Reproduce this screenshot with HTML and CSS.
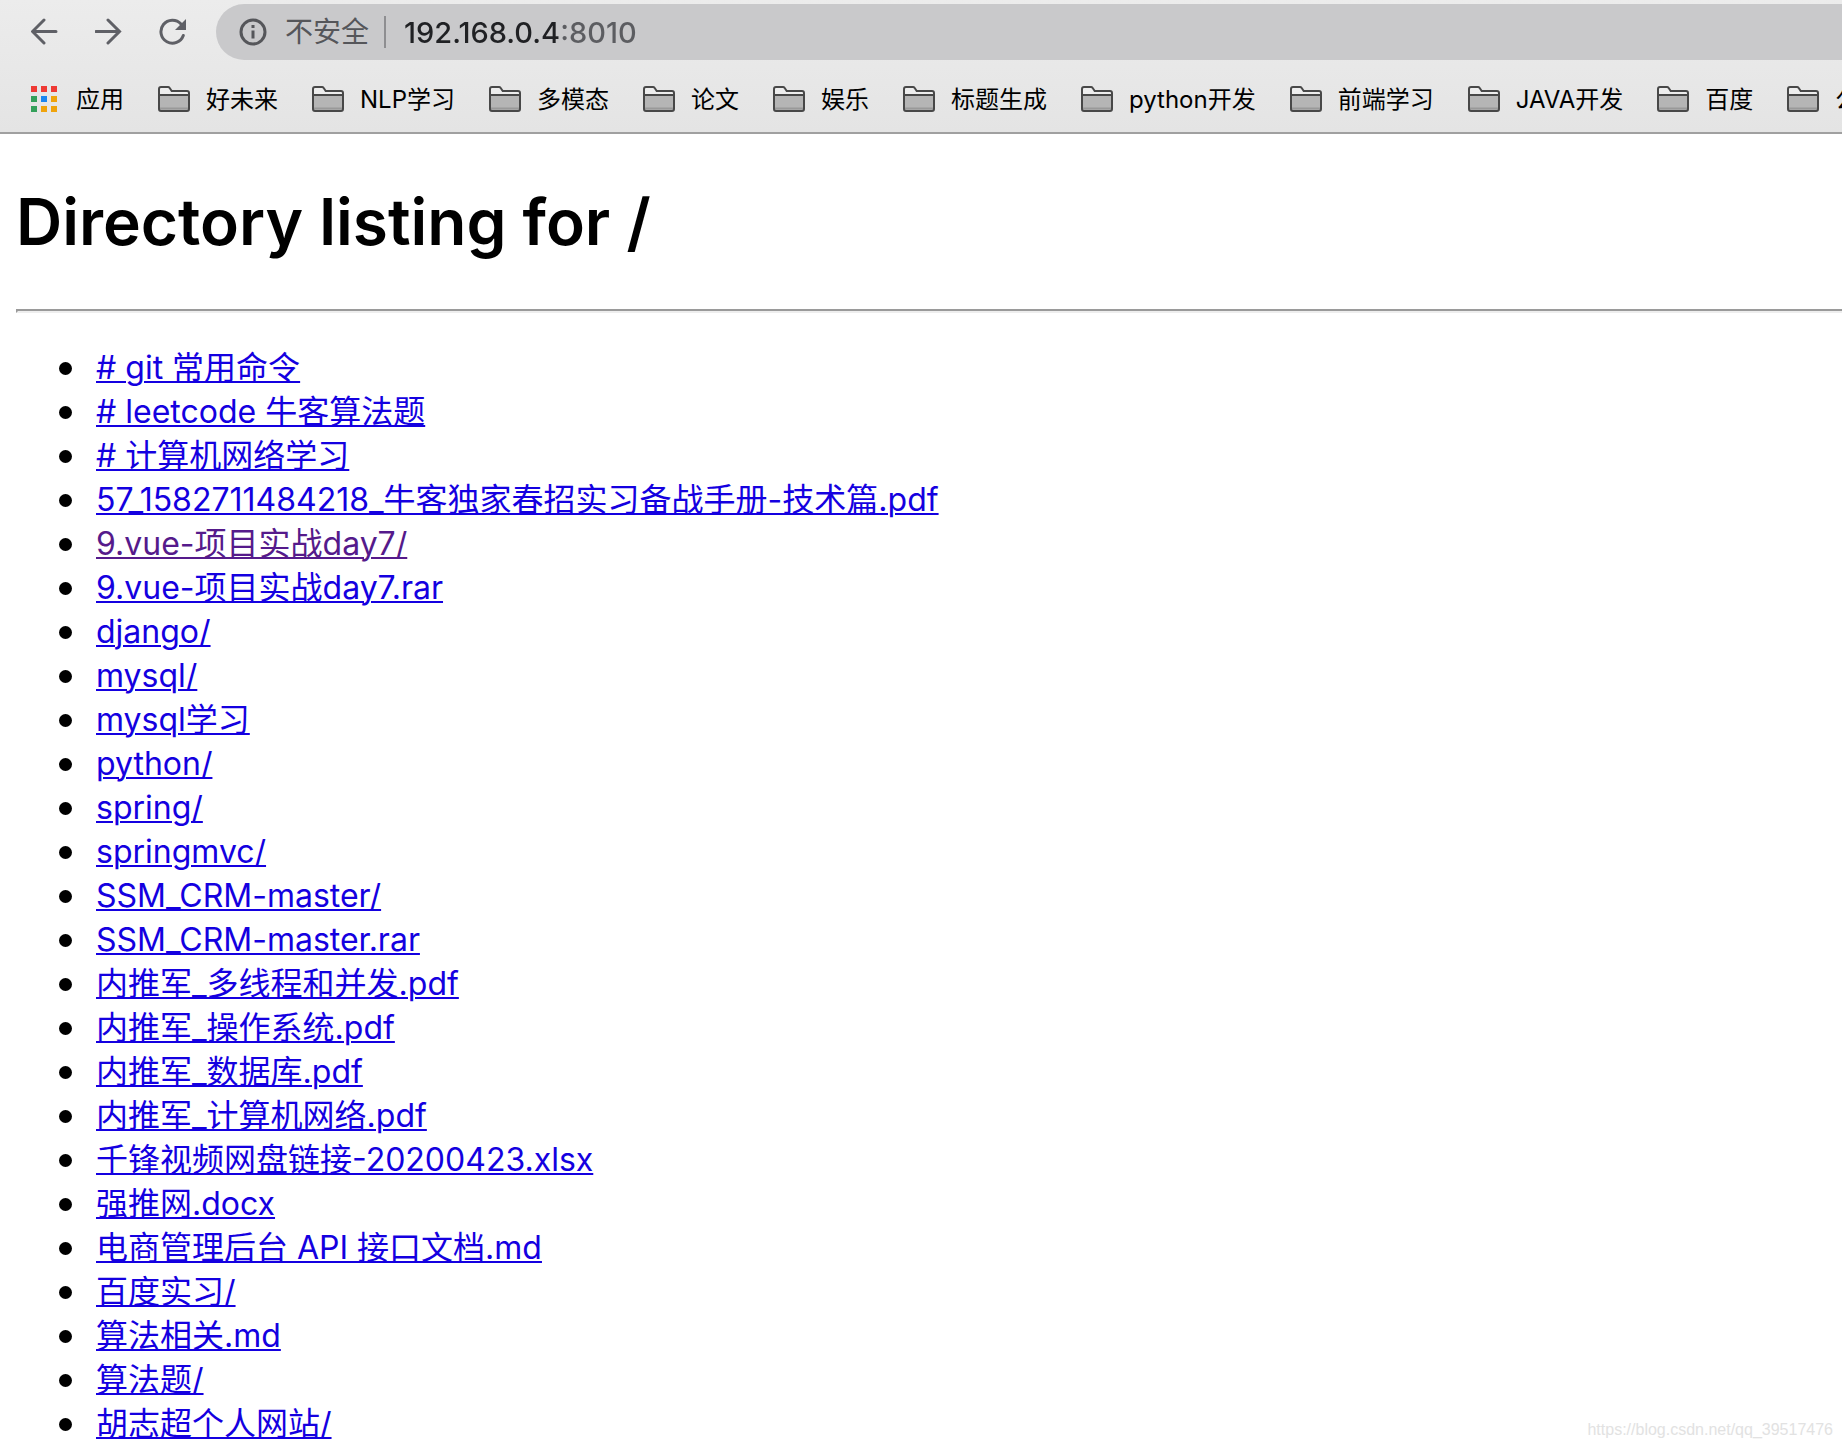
FILE: index.html
```html
<!DOCTYPE html>
<html lang="zh-CN">
<head>
	<meta charset="UTF-8">
	<title>Directory listing for /</title>
	<link rel="stylesheet" href="styles.css">
</head>
<body>
	<!-- 图标 -->
	<svg class="defs" width="0" height="0">
		<symbol id="folder" viewBox="0 0 32 26">
			<path d="M1 3q0-2 2-2h7q1 0 1.700 1l2 3H29q2 0 2 2v17H1z" fill="#ededed"/>
			<path d="M2 9h28v15H2z" fill="#b5b5b5"/>
			<path d="M2 22.500h28" stroke="#999" stroke-width="2"/>
			<path d="M1 9h30M1 23V3q0-2 2-2h7q1 0 1.700 1l2 3H29q2 0 2 2v16q0 2-2 2H3q-2 0-2-2z" fill="none" stroke="#484848" stroke-width="2"/>
		</symbol>
	</svg>

	<div class="browser">
		<div class="toolbar">
			<button type="button" aria-label="后退">
				<svg width="28" height="28" viewBox="0 0 28 28"><path d="M25 13.500H2M13 2L1.500 13.500 13 25"/></svg>
			</button>
			<button type="button" aria-label="前进">
				<svg width="28" height="28" viewBox="0 0 28 28"><path d="M1 13.500h23M13 2l11.500 11.500L13 25"/></svg>
			</button>
			<button type="button" aria-label="重新加载">
				<svg width="28" height="28" viewBox="0 0 28 28"><path d="M22 6A11.500 11.500 0 1 0 24.300 17.500"/><path class="fill" d="M27 1v11H16z"/></svg>
			</button>
			<div class="address">
				<svg width="28" height="28" viewBox="0 0 28 28"><circle cx="14" cy="14" r="12"/><path d="M14 12.500v8M14 7v3"/></svg>
				<label for="url">不安全</label>
				<input type="text" id="url" value="192.168.0.4:8010">
			</div>
		</div>

		<div class="bookmarks">
			<a href="#" class="apps">
				<svg width="26" height="26" viewBox="0 0 26 26">
					<path fill="#ee3a34" d="M0 0h6v6H0zM10 0h6v6h-6zM20 0h6v6h-6z"/>
					<path fill="#34a05a" d="M0 10h6v6H0zM0 20h6v6H0z"/>
					<path fill="#1a86f0" d="M10 10h6v6h-6z"/>
					<path fill="#efa30c" d="M20 10h6v6h-6zM10 20h6v6h-6zM20 20h6v6h-6z"/>
				</svg>应用
			</a>
			<a href="#"><svg width="32" height="26"><use href="#folder"/></svg>好未来</a>
			<a href="#"><svg width="32" height="26"><use href="#folder"/></svg>NLP学习</a>
			<a href="#"><svg width="32" height="26"><use href="#folder"/></svg>多模态</a>
			<a href="#"><svg width="32" height="26"><use href="#folder"/></svg>论文</a>
			<a href="#"><svg width="32" height="26"><use href="#folder"/></svg>娱乐</a>
			<a href="#"><svg width="32" height="26"><use href="#folder"/></svg>标题生成</a>
			<a href="#"><svg width="32" height="26"><use href="#folder"/></svg>python开发</a>
			<a href="#"><svg width="32" height="26"><use href="#folder"/></svg>前端学习</a>
			<a href="#"><svg width="32" height="26"><use href="#folder"/></svg>JAVA开发</a>
			<a href="#"><svg width="32" height="26"><use href="#folder"/></svg>百度</a>
			<a href="#"><svg width="32" height="26"><use href="#folder"/></svg>公</a>
		</div>
	</div>

	<div class="page">
		<h1>Directory listing for /</h1>
		<hr>
		<ul>
			<li><a href="#"># git 常用命令</a></li>
			<li><a href="#"># leetcode 牛客算法题</a></li>
			<li><a href="#"># 计算机网络学习</a></li>
			<li><a href="#">57_1582711484218_牛客独家春招实习备战手册-技术篇.pdf</a></li>
			<li><a href="#" class="visited">9.vue-项目实战day7/</a></li>
			<li><a href="#">9.vue-项目实战day7.rar</a></li>
			<li><a href="#">django/</a></li>
			<li><a href="#">mysql/</a></li>
			<li><a href="#">mysql学习</a></li>
			<li><a href="#">python/</a></li>
			<li><a href="#">spring/</a></li>
			<li><a href="#">springmvc/</a></li>
			<li><a href="#">SSM_CRM-master/</a></li>
			<li><a href="#">SSM_CRM-master.rar</a></li>
			<li><a href="#">内推军_多线程和并发.pdf</a></li>
			<li><a href="#">内推军_操作系统.pdf</a></li>
			<li><a href="#">内推军_数据库.pdf</a></li>
			<li><a href="#">内推军_计算机网络.pdf</a></li>
			<li><a href="#">千锋视频网盘链接-20200423.xlsx</a></li>
			<li><a href="#">强推网.docx</a></li>
			<li><a href="#">电商管理后台 API 接口文档.md</a></li>
			<li><a href="#">百度实习/</a></li>
			<li><a href="#">算法相关.md</a></li>
			<li><a href="#">算法题/</a></li>
			<li><a href="#">胡志超个人网站/</a></li>
		</ul>
	</div>
	<div class="watermark">https://blog.csdn.net/qq_39517476</div>
</body>
</html>
```

FILE: styles.css
```css
/*common*/
*{
	box-sizing: border-box;
}
body{
	position: relative;
	margin: 0;
	overflow-x: hidden;
	background-color: #fff;
	color: #000;
	font-family: Inter, "Noto Sans CJK SC", sans-serif;
	font-size: 32px;
}
.defs{
	position: absolute;
}

/*browser*/
.browser{
	overflow: hidden;
	border-bottom: 2px solid #a0a0a0;
	background: linear-gradient(#ececec, #e4e4e4);
}
.toolbar{
	display: flex;
	align-items: center;
	padding: 4px 0 4px 31px;
}
.toolbar svg{
	display: block;
	fill: none;
	stroke: #5f6066;
	stroke-width: 3;
	stroke-linecap: round;
}
.toolbar .fill{
	fill: #5f6066;
	stroke: none;
}
.toolbar button{
	margin: 0 36px 0 0;
	padding: 0;
	border: 0;
	background: none;
}
.toolbar button:nth-child(3){
	margin-right: 29px;
}
.address{
	display: flex;
	flex: 1;
	align-items: center;
	height: 56px;
	padding-left: 23px;
	border-radius: 28px 0 0 28px;
	background-color: #c9c9cb;
	font-size: 28px;
}
.address svg{
	stroke: #55565a;
	stroke-linecap: butt;
}
.address label{
	margin-left: 18px;
	padding-right: 15px;
	border-right: 2px solid #8e8e91;
	color: #55565a;
	line-height: 32px;
}
.address input{
	flex: 1;
	margin-left: 18px;
	padding: 0;
	border: 0;
	outline: 0;
	/*端口号颜色浅一些*/
	background: linear-gradient(to right, #202124 158px, #5c5d61 158px);
	-webkit-background-clip: text;
	background-clip: text;
	color: transparent;
	font: inherit;
	font-size: 29px;
	font-weight: 500;
}

/*bookmarks*/
.bookmarks{
	display: flex;
	gap: 34px;
	height: 68px;
	padding: 0 0 2px 31px;
}
.bookmarks a{
	display: flex;
	flex: none;
	align-items: center;
	gap: 16px;
	color: #000;
	font-size: 24px;
	text-decoration: none;
}
.bookmarks svg{
	margin-top: 4px;
}
.bookmarks .apps{
	gap: 19px;
}

/*list*/
.page{
	padding: 43px 0 0 16px;
}
h1{
	margin: 0 0 42px;
	font-size: 64px;
	font-weight: 600;
	line-height: 90px;
}
hr{
	height: 4px;
	margin: 0;
	border: 2px solid #eee;
	border-top-color: #9a9a9a;
	border-left-color: #9a9a9a;
	border-right: 0;
}
ul{
	margin: 33px 0 0;
	padding-left: 80px;
	list-style: none;
}
li{
	line-height: 44px;
}
li::before{
	content: "";
	display: inline-block;
	width: 13px;
	height: 13px;
	margin: 0 24px 4px -37px;
	border-radius: 50%;
	background-color: #000;
}
li a{
	color: #1400e0;
	text-decoration-thickness: 2px;
	text-underline-offset: 2px;
}
li .visited{
	color: #551a8b;
}

.watermark{
	position: absolute;
	right: 9px;
	bottom: 7px;
	color: #e2e2e2;
	font-family: "Liberation Sans", sans-serif;
	font-size: 16px;
}
```
